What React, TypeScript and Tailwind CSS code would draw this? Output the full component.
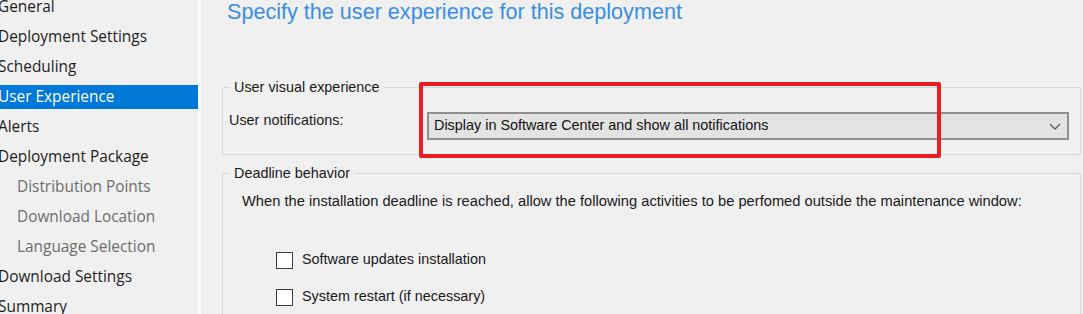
import React from "react";

const navItems: { label: string; sub?: boolean; active?: boolean }[] = [
  { label: "General" },
  { label: "Deployment Settings" },
  { label: "Scheduling" },
  { label: "User Experience", active: true },
  { label: "Alerts" },
  { label: "Deployment Package" },
  { label: "Distribution Points", sub: true },
  { label: "Download Location", sub: true },
  { label: "Language Selection", sub: true },
  { label: "Download Settings" },
  { label: "Summary" },
];

function Checkbox({ label }: { label: string }) {
  return (
    <div className="flex items-center h-[20px]">
      <div className="w-[17px] h-[17px] border-[1.5px] border-[#3c3c3c] bg-white" />
      <span className="ml-[9px] text-[14.4px] text-[#1a1a1a]">{label}</span>
    </div>
  );
}

export default function App() {
  return (
    <div
      className="relative w-[1083px] h-[314px] overflow-hidden bg-[#f0f0f0] flex"
      style={{ fontFamily: '"Liberation Sans", Arial, sans-serif' }}
    >
      {/* Sidebar */}
      <div
        className="w-[198px] shrink-0 bg-[#f0f0f0] flex flex-col gap-[6px] -mt-[5px]"
        style={{ fontFamily: '"Open Sans", "Noto Sans", sans-serif' }}
      >
        {navItems.map((it) => (
          <div
            key={it.label}
            className={
              "h-[24px] shrink-0 flex items-center text-[15.4px] whitespace-nowrap " +
              (it.active ? "bg-[#0078d7] text-white" : it.sub ? "text-[#6d6d6d]" : "text-[#1e1e1e]")
            }
          >
            <span className={it.sub ? "ml-[17px]" : "-ml-[2px]"}>{it.label}</span>
          </div>
        ))}
      </div>
      <div className="w-[3px] shrink-0 bg-[#fbfbfb]" />

      {/* Main */}
      <div className="flex-1 pl-[21px] pr-[2px] -mt-[3px]">
        <div className="ml-[5px] text-[21.6px] leading-[30px] text-[#3a8ee6] whitespace-nowrap">
          Specify the user experience for this deployment
        </div>

        <fieldset className="mt-[52px] border border-[#d8d8d8] rounded-[2px] pl-[7px] pr-[11px] pb-[14px]">
          <legend className="pl-[4px] pr-[4px] text-[14.4px] leading-[16px] text-[#1a1a1a]">
            User visual experience
          </legend>
          <div className="mt-[17px] flex items-center">
            <div className="w-[198px] -ml-[1px] text-[14.4px] text-[#1a1a1a] -mt-[10px]">User notifications:</div>
            <div className="flex-1 h-[28px] border-2 border-[#8f8f8f] bg-[#e3e3e3] flex items-center justify-between pl-[5px] pr-[6px]">
              <span className="text-[14.4px] text-[#111]">Display in Software Center and show all notifications</span>
              <svg width="12" height="7" viewBox="0 0 12 7">
                <path d="M1 1 L6 6 L11 1" fill="none" stroke="#5a5a5a" strokeWidth="1.3" />
              </svg>
            </div>
          </div>
        </fieldset>

        <fieldset className="mt-[10px] border border-[#d8d8d8] rounded-[2px] pl-[7px] pr-[11px] pb-[20px]">
          <legend className="pl-[4px] pr-[4px] text-[14.4px] leading-[16px] text-[#1a1a1a]">
            Deadline behavior
          </legend>
          <div className="mt-[12px] ml-[12px] text-[14.7px] leading-[16px] text-[#1a1a1a] whitespace-nowrap">
            When the installation deadline is reached, allow the following activities to be perfomed outside the maintenance window:
          </div>
          <div className="mt-[41px] ml-[46px] flex flex-col gap-[17px]">
            <Checkbox label="Software updates installation" />
            <Checkbox label="System restart (if necessary)" />
          </div>
        </fieldset>
      </div>

      {/* Red annotation box */}
      <div className="absolute left-[419px] top-[82px] w-[522px] h-[76px] border-[4px] border-[#ec1c24] rounded-[2px]" />
    </div>
  );
}
